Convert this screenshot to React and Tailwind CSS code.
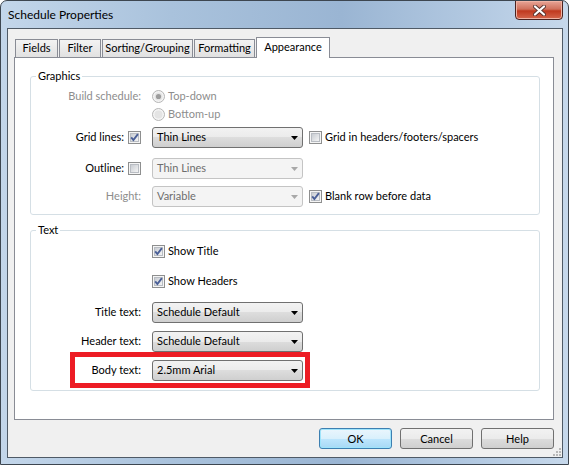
import React from 'react'

function Check({ checked }) {
  return (
    <svg width="13" height="13" viewBox="0 0 13 13" className="shrink-0">
      <defs>
        <linearGradient id="cbx" x1="0" y1="0" x2="1" y2="1">
          <stop offset="0" stopColor="#c6cad0" />
          <stop offset="1" stopColor="#f7f7f7" />
        </linearGradient>
      </defs>
      <rect x="0.5" y="0.5" width="12" height="12" fill="#f5f5f5" stroke="#8e8f8f" />
      <rect x="2.5" y="2.5" width="8" height="8" fill="url(#cbx)" stroke="#b9bdc3" />
      {checked && <path d="M3.2 6.3 L5.4 9 L9.9 3.2" fill="none" stroke="#4a5f97" strokeWidth="1.9" />}
    </svg>
  )
}

function Radio({ checked }) {
  return (
    <svg width="13" height="13" viewBox="0 0 13 13" className="shrink-0">
      <circle cx="6.5" cy="6.5" r="6" fill="#f4f4f4" stroke="#b5b5b5" />
      <circle cx="6.5" cy="6.5" r="4" fill="#e4e4e4" />
      {checked && <circle cx="6.5" cy="6.5" r="2.6" fill="#9c9c9c" />}
    </svg>
  )
}

function Combo({ value, disabled }) {
  return (
    <div
      className={`w-[151px] h-[21px] flex items-center justify-between pl-[4px] pr-[4px] rounded-[3px] border ${
        disabled
          ? 'border-[#c4c4c4] bg-[#f4f4f4] text-[#6d6d6d]'
          : 'border-[#707070] bg-[linear-gradient(#f2f2f2_0%,#ebebeb_50%,#dddddd_50%,#cfcfcf_100%)] text-black'
      }`}
    >
      <span>{value}</span>
      <svg width="7" height="4" viewBox="0 0 7 4">
        <path d="M0 0 H7 L3.5 4 Z" fill={disabled ? '#a8a8a8' : '#000'} />
      </svg>
    </div>
  )
}

function Row({ label, dim, box, className = '', children }) {
  return (
    <div className={`flex items-center ${className}`}>
      <div className={`w-[110px] flex justify-end items-center gap-[4px] ${dim ? 'text-[#8d8d8d]' : 'text-black'}`}>
        {label && <span>{label}</span>}
        {box}
      </div>
      <div className="ml-[11px] flex items-center">{children}</div>
    </div>
  )
}

function Group({ title, className = '', children }) {
  return (
    <div className={`relative border border-[#d5dfe5] rounded-[3px] ${className}`}>
      <span className="absolute left-[5px] -top-[9px] px-[2px] bg-white leading-[16px] text-black">{title}</span>
      {children}
    </div>
  )
}

const tabs = [
  { name: 'Fields', w: 'w-[43px]' },
  { name: 'Filter', w: 'w-[42px]' },
  { name: 'Sorting/Grouping', w: 'w-[91px]' },
  { name: 'Formatting', w: 'w-[61px]' },
]

function Btn({ children, primary }) {
  return (
    <button
      className={`w-[73px] h-[21px] rounded-[3px] border text-black leading-none ${
        primary
          ? 'border-[#3c7fb1] shadow-[inset_0_0_0_1px_#9ee4fb] bg-[linear-gradient(#eaf6fd_0%,#d9f0fc_50%,#bee6fd_50%,#a7d9f5_100%)]'
          : 'border-[#707070] bg-[linear-gradient(#f2f2f2_0%,#ebebeb_50%,#dddddd_50%,#cfcfcf_100%)]'
      }`}
    >
      {children}
    </button>
  )
}

export default function App() {
  return (
    <div className="w-[569px] h-[465px] flex flex-col border border-[#3d4650] rounded-t-[7px] bg-[linear-gradient(90deg,#c3d6ea_0%,#a9c2dc_30%,#9ab5d3_60%,#b4cae2_85%,#c6d8eb_100%)] font-['Lato',sans-serif] text-[11px] overflow-hidden">
      {/* title bar */}
      <div className="h-[27px] flex items-start justify-between">
        <span className="ml-[7px] mt-[6px] leading-[16px] text-[12px] text-black">Schedule Properties</span>
        <div className="mr-[5px] -mt-px w-[48px] h-[20px] rounded-b-[4px] border border-[#4b2320] bg-[linear-gradient(#e8a597_0%,#d0715c_45%,#c0391f_55%,#d5664c_100%)] shadow-[inset_0_0_0_1px_#f0b3a4] flex items-center justify-center">
          <svg width="13" height="11" viewBox="0 0 13 11">
            <path d="M2 1.5 L11 9.5 M11 1.5 L2 9.5" stroke="#5a3530" strokeWidth="4" strokeLinecap="round" />
            <path d="M2 1.5 L11 9.5 M11 1.5 L2 9.5" stroke="#ffffff" strokeWidth="2.2" strokeLinecap="round" />
          </svg>
        </div>
      </div>

      {/* client area */}
      <div className="ml-[6px] mr-[5px] mb-[6px] flex-1 border border-[#4f5a66] bg-[#f0f0f0] flex flex-col relative">
        <div className="mt-[8px] ml-[7px] h-[20px] flex items-end">
          {tabs.map(t => (
            <div
              key={t.name}
              className={`${t.w} h-[18px] mr-[1px] border border-b-0 border-[#898c95] bg-[linear-gradient(#f3f3f3,#e1e1e1)] flex items-center justify-center text-black`}
            >
              {t.name}
            </div>
          ))}
          <div className="relative z-10 -mb-px w-[74px] h-[21px] border border-b-0 border-[#898c95] bg-white flex items-center justify-center text-black pb-[2px]">
            Appearance
          </div>
        </div>

        {/* tab panel */}
        <div className="ml-[6px] w-[540px] h-[363px] border border-[#898c95] bg-white flex flex-col">
          <Group title="Graphics" className="mt-[18px] ml-[15px] w-[510px] pt-[10px] pb-[7px]">
            <Row label="Build schedule:" dim className="h-[18px]">
              <Radio checked />
              <span className="ml-[3px] text-[#8d8d8d]">Top-down</span>
            </Row>
            <Row className="h-[18px]">
              <Radio />
              <span className="ml-[3px] text-[#8d8d8d]">Bottom-up</span>
            </Row>
            <Row label="Grid lines:" box={<Check checked />} className="h-[21px] mt-[4px]">
              <Combo value="Thin Lines" />
              <div className="ml-[6px] flex items-center">
                <Check />
                <span className="ml-[3px]">Grid in headers/footers/spacers</span>
              </div>
            </Row>
            <Row label="Outline:" box={<Check />} className="h-[21px] mt-[10px]">
              <Combo value="Thin Lines" disabled />
            </Row>
            <Row label="Height:" dim className="h-[21px] mt-[7px]">
              <Combo value="Variable" disabled />
              <div className="ml-[6px] flex items-center">
                <Check checked />
                <span className="ml-[3px]">Blank row before data</span>
              </div>
            </Row>
          </Group>

          <Group title="Text" className="mt-[15px] ml-[15px] w-[510px] pt-[11px] pb-[9px]">
            <Row className="h-[18px]">
              <Check checked />
              <span className="ml-[3px]">Show Title</span>
            </Row>
            <Row className="h-[18px] mt-[12px]">
              <Check checked />
              <span className="ml-[3px]">Show Headers</span>
            </Row>
            <Row label="Title text:" className="h-[21px] mt-[12px]">
              <Combo value="Schedule Default" />
            </Row>
            <Row label="Header text:" className="h-[21px] mt-[8px]">
              <Combo value="Schedule Default" />
            </Row>
            <div className="relative mt-[8px]">
              <Row label="Body text:" className="h-[21px]">
                <Combo value="2.5mm Arial" />
              </Row>
              <div className="absolute left-[39px] -top-[8px] w-[240px] h-[36px] border-[5px] border-[#ed1c24]" />
            </div>
          </Group>
        </div>

        {/* buttons */}
        <div className="mt-[8px] w-[546px] flex justify-end gap-[8px]">
          <Btn primary>OK</Btn>
          <Btn>Cancel</Btn>
          <Btn>Help</Btn>
        </div>

        <svg className="absolute right-[1px] bottom-[1px]" width="8" height="8" viewBox="0 0 8 8">
          {[[6, 0], [6, 3], [3, 3], [6, 6], [3, 6], [0, 6]].map(([x, y], i) => (
            <rect key={i} x={x} y={y} width="2" height="2" fill="#b8b8b8" />
          ))}
        </svg>
      </div>
    </div>
  )
}
